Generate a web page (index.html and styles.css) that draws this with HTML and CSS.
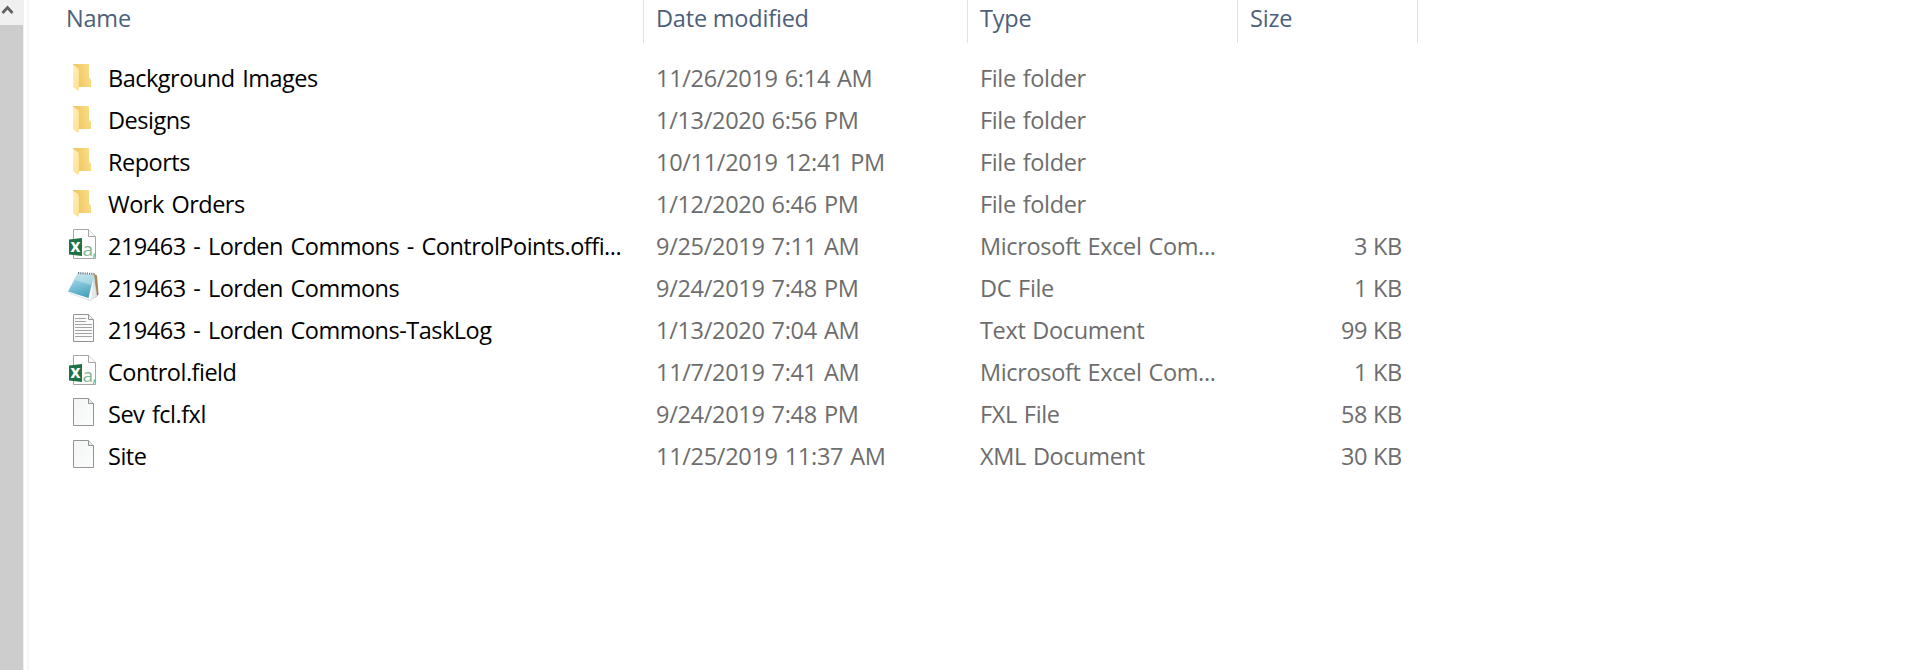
FILE: index.html
```html
<!DOCTYPE html>
<html lang="en">
<head>
<meta charset="utf-8">
<title>Files</title>
<link rel="stylesheet" href="styles.css">
</head>
<body>
<svg class="defs" width="0" height="0" aria-hidden="true">
  <defs>
    <linearGradient id="gFolder" x1="0" y1="0.2" x2="1" y2="0"><stop offset="0" stop-color="#ecc35f"/><stop offset="1" stop-color="#fde08a"/></linearGradient>
    <linearGradient id="gFlap" x1="0" y1="0" x2="1" y2="1"><stop offset="0" stop-color="#fff0bd"/><stop offset="1" stop-color="#fddf8c"/></linearGradient>
    <linearGradient id="gPage" x1="0" y1="0" x2="1" y2="1"><stop offset="0" stop-color="#f3f5f6"/><stop offset="1" stop-color="#fcfdfd"/></linearGradient>
    <linearGradient id="gPad" x1="0.3" y1="0" x2="0.6" y2="1"><stop offset="0" stop-color="#b5dbe6"/><stop offset="0.45" stop-color="#7fc4d8"/><stop offset="1" stop-color="#439fb9"/></linearGradient>
  </defs>
  <symbol id="folder" viewBox="0 0 34 42">
    <path fill="url(#gFolder)" d="M7 6h16v13.500l2 2.500V29H12V12L7 7z"/>
    <path fill="url(#gFlap)" d="M7 6.500 12.500 10.500 13 14V30l-1 3L7 29z"/>
  </symbol>
  <symbol id="blank" viewBox="0 0 34 42">
    <path fill="url(#gPage)" stroke="#949494" d="M7.500 4.500h15l5 5v22h-20z"/>
    <path fill="#e9e9e9" stroke="#949494" d="M22.500 4.500v5h5"/>
  </symbol>
  <symbol id="text" viewBox="0 0 34 42">
    <path fill="#fafafa" stroke="#949494" d="M7.500 4.500h15l5 5v22h-20z"/>
    <path fill="#f2f2f2" stroke="#949494" d="M22.500 4.500v5h5"/>
    <path stroke="#a2a2a2" d="M9 8.500h11M9 11.500h11M9 14.500h17M9 17.500h17M9 20.500h17M9 23.500h17M9 26.500h17"/>
  </symbol>
  <symbol id="excel" viewBox="0 0 34 42">
    <path fill="#fff" stroke="#a6a6a6" d="M7.500 3.500h15l7 7v22h-22z"/>
    <path fill="#fff" stroke="#a6a6a6" d="M22.500 3.500v7h7"/>
    <path fill="#1f7246" d="M3 13.500 16 12v18L3 28.500z"/>
  </symbol>
  <symbol id="notepad" viewBox="0 0 34 42">
    <path fill="#a58458" d="M28 6 31 7.500 32.500 26 30 29z"/>
    <path fill="#6c5740" d="M31 24.500 32.500 26 29 30z"/>
    <path fill="#eef3f6" stroke="#c6cfd4" stroke-width=".6" d="M27 6 31 28 24.500 32.500 20 31z"/>
    <path fill="#fff" d="M27 7 24.500 32.500 3 25V23z"/>
    <path stroke="#cbd5d9" stroke-width=".7" fill="none" d="M27.500 9 27 31M28.500 10 29.300 29.500M3 25l21.500 7.500"/>
    <path fill="url(#gPad)" d="M11.500 5.500 28 7 22.500 30 2 23.500z"/>
    <path fill="#d8edf3" opacity=".45" d="M11.500 5.500 28 7 25 17 9 12z"/>
    <path stroke="#70797d" stroke-width="2" stroke-dasharray="1.200 1" fill="none" d="M12 5 28.500 6"/>
  </symbol>
</svg>
<div class="window">
  <aside class="scrollbar">
    <div class="scroll-button"><svg width="23" height="25" viewBox="0 0 23 25"><path d="M2.500 13 7.500 7.500 12.500 13" fill="none" stroke="#606060" stroke-width="2.700"/></svg></div>
    <div class="thumb"></div>
  </aside>
  <div class="divider"></div>
  <main class="list">
    <div class="grid header">
      <div class="cell name">Name</div><div class="cell date">Date modified</div><div class="cell type">Type</div><div class="cell size">Size</div>
    </div>
    <div class="rows">
      <div class="grid row"><div class="name"><svg class="icon"><use href="#folder"/></svg><span>Background Images</span></div><div class="date"><span>11/26/2019 6:14 AM</span></div><div class="type"><span>File folder</span></div><div class="size"></div></div>
      <div class="grid row"><div class="name"><svg class="icon"><use href="#folder"/></svg><span>Designs</span></div><div class="date"><span>1/13/2020 6:56 PM</span></div><div class="type"><span>File folder</span></div><div class="size"></div></div>
      <div class="grid row"><div class="name"><svg class="icon"><use href="#folder"/></svg><span>Reports</span></div><div class="date"><span>10/11/2019 12:41 PM</span></div><div class="type"><span>File folder</span></div><div class="size"></div></div>
      <div class="grid row"><div class="name"><svg class="icon"><use href="#folder"/></svg><span>Work Orders</span></div><div class="date"><span>1/12/2020 6:46 PM</span></div><div class="type"><span>File folder</span></div><div class="size"></div></div>
      <div class="grid row"><div class="name"><svg class="icon"><use href="#excel"/><text x="9.500" y="25.500" class="excel-x" text-anchor="middle">x</text><text x="16.500" y="29.500" class="excel-a">a,</text></svg><span>219463 - Lorden Commons - ControlPoints.offi...</span></div><div class="date"><span>9/25/2019 7:11 AM</span></div><div class="type"><span>Microsoft Excel Com...</span></div><div class="size"><span>3 KB</span></div></div>
      <div class="grid row"><div class="name"><svg class="icon"><use href="#notepad"/></svg><span>219463 - Lorden Commons</span></div><div class="date"><span>9/24/2019 7:48 PM</span></div><div class="type"><span>DC File</span></div><div class="size"><span>1 KB</span></div></div>
      <div class="grid row"><div class="name"><svg class="icon"><use href="#text"/></svg><span>219463 - Lorden Commons-TaskLog</span></div><div class="date"><span>1/13/2020 7:04 AM</span></div><div class="type"><span>Text Document</span></div><div class="size"><span>99 KB</span></div></div>
      <div class="grid row"><div class="name"><svg class="icon"><use href="#excel"/><text x="9.500" y="25.500" class="excel-x" text-anchor="middle">x</text><text x="16.500" y="29.500" class="excel-a">a,</text></svg><span>Control.field</span></div><div class="date"><span>11/7/2019 7:41 AM</span></div><div class="type"><span>Microsoft Excel Com...</span></div><div class="size"><span>1 KB</span></div></div>
      <div class="grid row"><div class="name"><svg class="icon"><use href="#blank"/></svg><span>Sev fcl.fxl</span></div><div class="date"><span>9/24/2019 7:48 PM</span></div><div class="type"><span>FXL File</span></div><div class="size"><span>58 KB</span></div></div>
      <div class="grid row"><div class="name"><svg class="icon"><use href="#blank"/></svg><span>Site</span></div><div class="date"><span>11/25/2019 11:37 AM</span></div><div class="type"><span>XML Document</span></div><div class="size"><span>30 KB</span></div></div>
    </div>
  </main>
</div>
</body>
</html>
```
FILE: styles.css
```css
* { box-sizing: border-box; }
body { margin: 0; background: #fff; font-family: "Open Sans", "Noto Sans", sans-serif; font-size: 23.5px; overflow: hidden; }
.defs { position: absolute; }
.window { display: flex; height: 670px; }
.scrollbar { width: 24px; display: flex; flex-direction: column; background: #f0f0f0; }
.scroll-button { height: 25px; }
.scroll-button svg { display: block; }
.thumb { flex: 1; width: 23px; background: #cdcdcd; }
.divider { width: 2px; margin-left: 3px; background: #f7f7f7; }
.list { flex: 1; }
.grid { display: grid; grid-template-columns: 615px 324px 270px 180px; white-space: nowrap; }
.header { height: 43px; color: #4c607a; line-height: 36px; letter-spacing: -0.2px; }
.cell { border-right: 1px solid #e2e2e2; }
.header .name { padding-left: 37px; }
.header .date, .header .type, .header .size { padding-left: 12px; }
.rows { padding-top: 15px; }
.row { height: 42px; line-height: 40px; color: #6d6d6d; }
.row .name { display: flex; padding-left: 37px; color: #000; letter-spacing: -0.5px; word-spacing: 2px; }
.row .date { padding-left: 12px; letter-spacing: -0.3px; word-spacing: 1.2px; }
.row .type { padding-left: 12px; letter-spacing: -0.35px; word-spacing: 1.2px; }
.row .size { padding-right: 16px; text-align: right; letter-spacing: -0.3px; }
.icon { width: 34px; height: 42px; margin-right: 8px; flex: none; letter-spacing: 0; word-spacing: 0; }
.excel-x { font: bold 17px "Open Sans", sans-serif; fill: #fff; }
.excel-a { font: 19px "Open Sans", sans-serif; fill: #7fba94; letter-spacing: -1px; }
```
